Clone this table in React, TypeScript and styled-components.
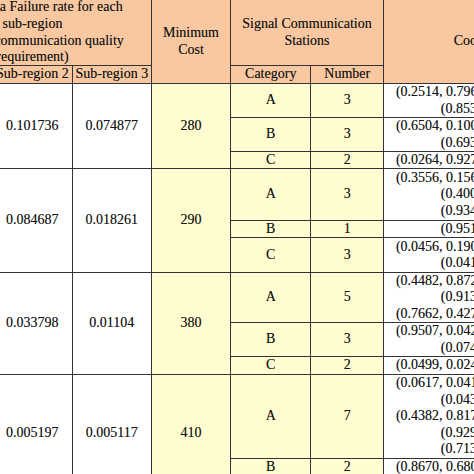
import React from "react";
import styled, { createGlobalStyle } from "styled-components";

const Global = createGlobalStyle`
  html, body { margin: 0; padding: 0; background: #ffffff; }
  body { overflow: hidden; }
`;

const Frame = styled.div`
  width: 474px;
  height: 474px;
  overflow: hidden;
  background: #ffffff;
`;

const Table = styled.div`
  display: grid;
  grid-template-columns: 78px 78.7px 78.3px 78px 79.5px 71.5px 207px;
  grid-template-rows: 65px 17px 33px 33px 16px 51px 16px 34px 49px 33px 17px 83px 16px 16px;
  gap: 1px;
  padding: 1px;
  width: max-content;
  margin-left: -87px;
  margin-top: -1px;
  background: #333333;
  font-family: "Liberation Serif", "Times New Roman", serif;
  font-size: 14px;
  color: #141414;
  text-shadow: 0 0 0.5px rgba(0, 0, 0, 0.45);
`;

type Tone = "head" | "yellow" | "white";

const tones: Record<Tone, string> = {
  head: "#f9c8a0",
  yellow: "#fffdcf",
  white: "#ffffff",
};

const Cell = styled.div<{ $col: string; $row: string; $tone: Tone }>`
  grid-column: ${(p) => p.$col};
  grid-row: ${(p) => p.$row};
  background: ${(p) => tones[p.$tone]};
  display: flex;
  flex-direction: column;
  align-items: center;
  justify-content: center;
  text-align: center;
  line-height: 16.5px;
  padding: 0 2px;
  overflow: visible;
  white-space: nowrap;
`;

const WrapText = styled.span`
  white-space: normal;
  line-height: 16.7px;
`;

const Line = styled.span`
  display: block;
  white-space: nowrap;
  line-height: 16.5px;
`;

const HeadLine = styled(Line)`
  line-height: 16.7px;
`;

type Sub = { cat: string; num: number; coords: string[] };
type Group = { r1: string; r2: string; r3: string; cost: number; subs: Sub[] };

const groups: Group[] = [
  {
    r1: "0.113952",
    r2: "0.101736",
    r3: "0.074877",
    cost: 280,
    subs: [
      { cat: "A", num: 3, coords: ["(0.2514, 0.7963),(0.3417, 0.512)", "(0.8531, 0.2374)"] },
      { cat: "B", num: 3, coords: ["(0.6504, 0.1002),(0.2275, 0.684)", "(0.6931, 0.4418)"] },
      { cat: "C", num: 2, coords: ["(0.0264, 0.9275),(0.5510, 0.312)"] },
    ],
  },
  {
    r1: "0.095218",
    r2: "0.084687",
    r3: "0.018261",
    cost: 290,
    subs: [
      {
        cat: "A",
        num: 3,
        coords: ["(0.3556, 0.1560),(0.6127, 0.441)", "(0.4006, 0.8253)", "(0.9342, 0.3307)"],
      },
      { cat: "B", num: 1, coords: ["(0.9518, 0.6602)"] },
      { cat: "C", num: 3, coords: ["(0.0456, 0.1903),(0.7724, 0.285)", "(0.0417, 0.5596)"] },
    ],
  },
  {
    r1: "0.041736",
    r2: "0.033798",
    r3: "0.01104",
    cost: 380,
    subs: [
      {
        cat: "A",
        num: 5,
        coords: [
          "(0.4482, 0.8725),(0.1938, 0.306)",
          "(0.9135, 0.5514)",
          "(0.7662, 0.4271),(0.2803, 0.912)",
        ],
      },
      { cat: "B", num: 3, coords: ["(0.9507, 0.0428),(0.3351, 0.716)", "(0.0746, 0.4983)"] },
      { cat: "C", num: 2, coords: ["(0.0499, 0.0247),(0.6182, 0.380)"] },
    ],
  },
  {
    r1: "0.006084",
    r2: "0.005197",
    r3: "0.005117",
    cost: 410,
    subs: [
      {
        cat: "A",
        num: 7,
        coords: [
          "(0.0617, 0.0413),(0.5829, 0.226)",
          "(0.0431, 0.6605)",
          "(0.4382, 0.8172),(0.2719, 0.558)",
          "(0.9297, 0.1348)",
          "(0.7134, 0.3926)",
        ],
      },
      { cat: "B", num: 2, coords: ["(0.8670, 0.6808),(0.1452, 0.337)"] },
      { cat: "C", num: 1, coords: ["(0.3021, 0.7745)"] },
    ],
  },
];

export default function App() {
  let row = 3;
  const body: React.ReactNode[] = [];
  groups.forEach((g, gi) => {
    const start = row;
    const end = row + g.subs.length;
    const span = `${start} / ${end}`;
    body.push(
      <Cell key={`g${gi}-r1`} $col="1" $row={span} $tone="white">{g.r1}</Cell>,
      <Cell key={`g${gi}-r2`} $col="2" $row={span} $tone="white">{g.r2}</Cell>,
      <Cell key={`g${gi}-r3`} $col="3" $row={span} $tone="white">{g.r3}</Cell>,
      <Cell key={`g${gi}-c`} $col="4" $row={span} $tone="yellow">{g.cost}</Cell>
    );
    g.subs.forEach((s, si) => {
      const r = `${row + si}`;
      body.push(
        <Cell key={`g${gi}-s${si}-cat`} $col="5" $row={r} $tone="yellow">{s.cat}</Cell>,
        <Cell key={`g${gi}-s${si}-num`} $col="6" $row={r} $tone="yellow">{s.num}</Cell>,
        <Cell key={`g${gi}-s${si}-co`} $col="7" $row={r} $tone="white">
          {s.coords.map((c, ci) => (
            <Line key={ci}>{c}</Line>
          ))}
        </Cell>
      );
    });
    row = end;
  });

  return (
    <>
      <Global />
      <Frame>
        <Table>
          <Cell $col="1 / 4" $row="1" $tone="head">
            <HeadLine>(Max. Data Failure rate for each</HeadLine>
            <HeadLine>sub-region</HeadLine>
            <HeadLine>meeting (communication quality</HeadLine>
            <HeadLine>requirement)</HeadLine>
          </Cell>
          <Cell $col="4" $row="1 / 3" $tone="head">
            <WrapText>Minimum Cost</WrapText>
          </Cell>
          <Cell $col="5 / 7" $row="1" $tone="head">
            <WrapText>Signal Communication Stations</WrapText>
          </Cell>
          <Cell $col="7" $row="1 / 3" $tone="head">Coordinates</Cell>
          <Cell $col="1" $row="2" $tone="head">Sub-region 1</Cell>
          <Cell $col="2" $row="2" $tone="head">Sub-region 2</Cell>
          <Cell $col="3" $row="2" $tone="head">Sub-region 3</Cell>
          <Cell $col="5" $row="2" $tone="head">Category</Cell>
          <Cell $col="6" $row="2" $tone="head">Number</Cell>
          {body}
        </Table>
      </Frame>
    </>
  );
}
